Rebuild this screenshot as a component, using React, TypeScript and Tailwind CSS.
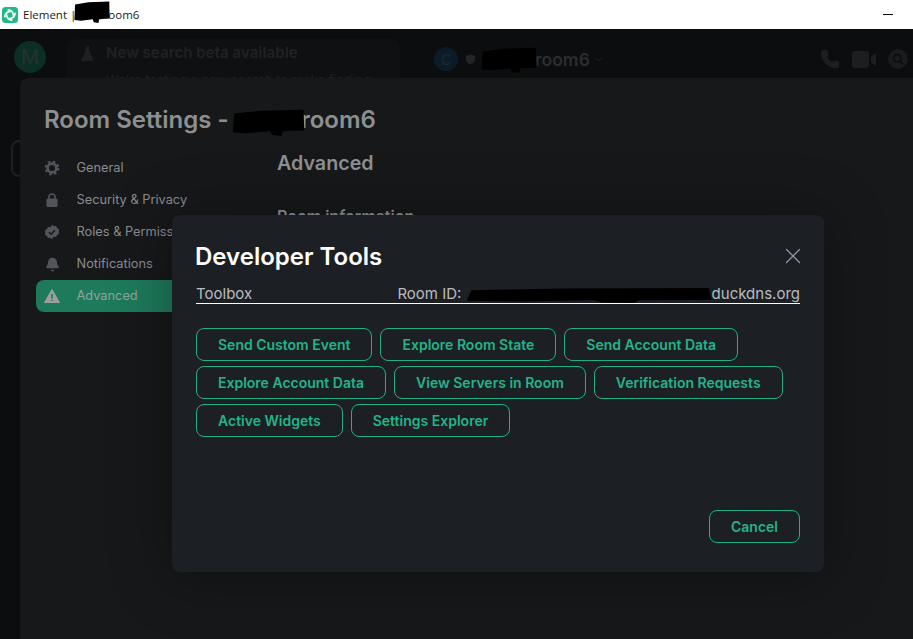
import { Phone, ChevronDown, X, Bell } from 'lucide-react'

const toolRows = [
  ['Send Custom Event', 'Explore Room State', 'Send Account Data'],
  ['Explore Account Data', 'View Servers in Room', 'Verification Requests'],
  ['Active Widgets', 'Settings Explorer'],
]

function ElementLogo() {
  return (
    <svg viewBox="0 0 16 16" className="h-4 w-4 shrink-0">
      <rect width="16" height="16" rx="3.5" fill="#1fb985" />
      <g fill="none" stroke="#fff" strokeWidth="1.7" strokeLinecap="round">
        <path d="M6.3 2.9a5 5 0 0 1 5 5" />
        <path d="M13.1 6.3a5 5 0 0 1-5 5" />
        <path d="M9.7 13.1a5 5 0 0 1-5-5" />
        <path d="M2.9 9.7a5 5 0 0 1 5-5" />
      </g>
    </svg>
  )
}

function Scribble({ className }: { className: string }) {
  return (
    <svg viewBox="0 0 100 30" preserveAspectRatio="none" className={`absolute ${className}`}>
      <path d="M3 6 L40 3 L98 2 L99 24 L70 25 L68 30 L55 29 L52 25 L20 27 L1 26 Z" fill="#000" />
    </svg>
  )
}

function OutlineButton({ label }: { label: string }) {
  return (
    <button className="h-[33px] rounded-lg border border-[#1fb185] px-[21px] text-[14px] font-semibold text-[#23b488]">
      {label}
    </button>
  )
}

function GearIcon() {
  return (
    <svg viewBox="0 0 16 16" className="h-4 w-4">
      <circle cx="8" cy="8" r="4.4" fill="none" stroke="#53555a" strokeWidth="2.6" />
      <circle cx="8" cy="8" r="6.4" fill="none" stroke="#53555a" strokeWidth="2" strokeDasharray="2.6 2.43" />
    </svg>
  )
}

function LockIcon() {
  return (
    <svg viewBox="0 0 16 16" className="h-4 w-4">
      <path d="M5 7.5V5a3 3 0 0 1 6 0v2.5" fill="none" stroke="#53555a" strokeWidth="1.6" />
      <rect x="2.5" y="6.5" width="11" height="8.5" rx="1.5" fill="#53555a" />
    </svg>
  )
}

function BadgeIcon() {
  return (
    <svg viewBox="0 0 16 16" className="h-4 w-4">
      <path
        d="M8 1l1.9 1.2 2.2-.1 1 2 1.9 1.1-.3 2.3.3 2.3-1.9 1.1-1 2-2.2-.1L8 15l-1.9-1.2-2.2.1-1-2-1.9-1.1.3-2.3-.3-2.3 1.9-1.1 1-2 2.2.1z"
        fill="#53555a"
      />
      <path d="M5 8.2l2.1 2.1L11 6.2" fill="none" stroke="#16181a" strokeWidth="1.5" />
    </svg>
  )
}

function WarningIcon() {
  return (
    <svg viewBox="0 0 16 16" className="h-4 w-4">
      <path d="M8 1.5L15.5 14.5H.5z" fill="#9c9e9f" strokeLinejoin="round" stroke="#9c9e9f" />
      <path d="M8 6v4.5M8 11.8v1.2" stroke="#1d7a5b" strokeWidth="1.6" />
    </svg>
  )
}

function ShieldIcon() {
  return (
    <svg viewBox="0 0 12 12" className="ml-[7px] h-[11px] w-[11px]">
      <path d="M6 .5L11 2v4c0 3-2.5 4.8-5 5.5C3.5 10.8 1 9 1 6V2z" fill="#232527" />
    </svg>
  )
}

function FlaskIcon() {
  return (
    <svg viewBox="0 0 14 20" className="h-[18px] w-[13px] text-[#1d1f21]">
      <path d="M5 2v5L.5 17a1.5 1.5 0 0 0 1.5 2h10a1.5 1.5 0 0 0 1.5-2L9 7V2z" fill="currentColor" />
    </svg>
  )
}

function VideoIcon() {
  return (
    <svg viewBox="0 0 24 17" className="ml-3 h-[17px] w-6">
      <rect width="17" height="17" rx="3" fill="#1c1e20" />
      <path d="M19 5.5L24 2v13l-5-3.5z" fill="#1c1e20" />
    </svg>
  )
}

function SearchIcon() {
  return (
    <div className="ml-3 flex h-5 w-5 items-center justify-center rounded-full bg-[#191b1d]">
      <svg viewBox="0 0 12 12" className="h-3 w-3">
        <circle cx="5.2" cy="5.2" r="3.7" fill="none" stroke="#0b0d0e" strokeWidth="1.8" />
        <path d="M8 8l3 3" stroke="#0b0d0e" strokeWidth="1.8" />
      </svg>
    </div>
  )
}

function TitleBar() {
  return (
    <div className="relative flex h-[29px] shrink-0 items-center bg-white pl-[2px] font-['Open_Sans',sans-serif] text-[11.5px] text-[#1a1a1a]">
      <ElementLogo />
      <span className="ml-[5px]">Element | </span>
      <span className="ml-[32px]">oom6</span>
      <Scribble className="left-[74px] top-0 h-[23px] w-[36px]" />
      <div className="ml-auto mr-[20px] h-px w-[10px] bg-black" />
    </div>
  )
}

function BackgroundApp() {
  return (
    <div className="flex h-[49px] shrink-0 bg-[#0b0d0e]">
      <div className="ml-[14px] mt-[12px] flex h-8 w-8 items-center justify-center rounded-full bg-[#0b2f26] text-[20px] text-[#26332f]">
        M
      </div>
      <div className="ml-[21px] mt-[10px] h-[39px] w-[333px] overflow-hidden rounded-t-lg bg-[#0e1011] pl-[14px] pt-[3px] text-[#1f2123]">
        <div className="flex items-center gap-[12px] text-[15px] font-bold">
          <FlaskIcon />
          New search beta available
        </div>
        <div className="mt-[6px] pl-[25px] text-[13px]">We're testing a new search to make finding</div>
      </div>
      <div className="relative ml-[34px] mt-[18px] flex h-6 flex-1 items-center">
        <div className="flex h-6 w-6 items-center justify-center rounded-full bg-[#0b1c28] text-[14px] text-[#1d2a33]">C</div>
        <ShieldIcon />
        <span className="ml-[59px] mt-[2px] text-[17.5px] font-semibold text-[#2b2d2f]">room6</span>
        <ChevronDown className="ml-[3px] h-[11px] w-[11px] text-[#232527]" />
        <Scribble className="left-[47px] top-[-1px] h-[27px] w-[56px]" />
        <Phone className="ml-[216px] h-[20px] w-[20px] fill-[#1c1e20] text-[#1c1e20]" />
        <VideoIcon />
        <SearchIcon />
      </div>
    </div>
  )
}

function NavRow({ label, icon }: { label: string; icon: React.ReactNode }) {
  return (
    <div className="flex h-8 items-center pl-2 text-[12.8px] text-[#8a8c8e]">
      <span className="flex w-4 justify-center">{icon}</span>
      <span className="ml-[16.5px] whitespace-nowrap">{label}</span>
    </div>
  )
}

function SettingsNav() {
  return (
    <nav className="flex w-[224px] flex-col pt-[15px]">
      <NavRow label="General" icon={<GearIcon />} />
      <NavRow label="Security & Privacy" icon={<LockIcon />} />
      <NavRow label="Roles & Permissions" icon={<BadgeIcon />} />
      <NavRow label="Notifications" icon={<Bell className="h-[15px] w-[15px] fill-[#53555a] text-[#53555a]" />} />
      <div className="flex h-8 items-center rounded-lg bg-[#1d7a5b] pl-2 text-[12.8px] text-[#8fa69c]">
        <span className="flex w-4 justify-center"><WarningIcon /></span>
        <span className="ml-[16.5px]">Advanced</span>
      </div>
    </nav>
  )
}

function RoomSettings() {
  return (
    <div className="absolute bottom-0 left-5 right-0 top-[78px] rounded-tl-lg bg-[#16181a]">
      <div className="relative pl-6 pt-[25px] text-[24px] font-semibold leading-[34px] text-[#8e8f91]">
        Room Settings - <span className="ml-[66px]">room6</span>
        <Scribble className="left-[212px] top-[30px] h-[28px] w-[73px]" />
      </div>
      <div className="flex pl-4">
        <SettingsNav />
        <div className="ml-[17px] pt-[14px]">
          <div className="text-[19.7px] font-semibold leading-[24px] text-[#8e8f91]">Advanced</div>
          <div className="mt-[29px] text-[16px] font-semibold text-[#8e8f91]">Room information</div>
        </div>
      </div>
    </div>
  )
}

function DeveloperTools() {
  return (
    <div className="absolute left-[172px] top-[215px] flex h-[357px] w-[652px] flex-col rounded-lg bg-[#1c1f24] px-6 pb-[29px] pt-6 shadow-[0_4px_60px_rgba(0,0,0,0.35)]">
      <div className="flex items-center justify-between">
        <h2 className="ml-[-1px] text-[24px] font-semibold leading-[36px] text-white">Developer Tools</h2>
        <X className="mr-[-6px] mt-[-2px] h-[26px] w-[26px] text-[#8d97a5]" strokeWidth={1.2} />
      </div>
      <div className="relative mt-[10px] flex h-[19px] justify-between border-b border-white text-[15px] leading-[18px] text-[#b9bcbf]">
        <span>Toolbox</span>
        <span>Room ID: <span className="ml-[246px]">duckdns.org</span></span>
        <Scribble className="left-[268px] top-[2px] h-[16px] w-[250px]" />
      </div>
      <div className="mt-[24px] flex flex-col gap-[5px]">
        {toolRows.map((row) => (
          <div key={row[0]} className="flex gap-2">
            {row.map((label) => (
              <OutlineButton key={label} label={label} />
            ))}
          </div>
        ))}
      </div>
      <div className="mt-auto flex justify-end">
        <OutlineButton label="Cancel" />
      </div>
    </div>
  )
}

export default function App() {
  return (
    <div className="relative flex h-[639px] w-[913px] flex-col overflow-hidden bg-[#0b0d0e] font-['Inter',sans-serif]">
      <TitleBar />
      <BackgroundApp />
      <div className="absolute left-[11px] top-[140px] h-[37px] w-[20px] rounded-lg border-2 border-[#1e2022]" />
      <RoomSettings />
      <DeveloperTools />
    </div>
  )
}
